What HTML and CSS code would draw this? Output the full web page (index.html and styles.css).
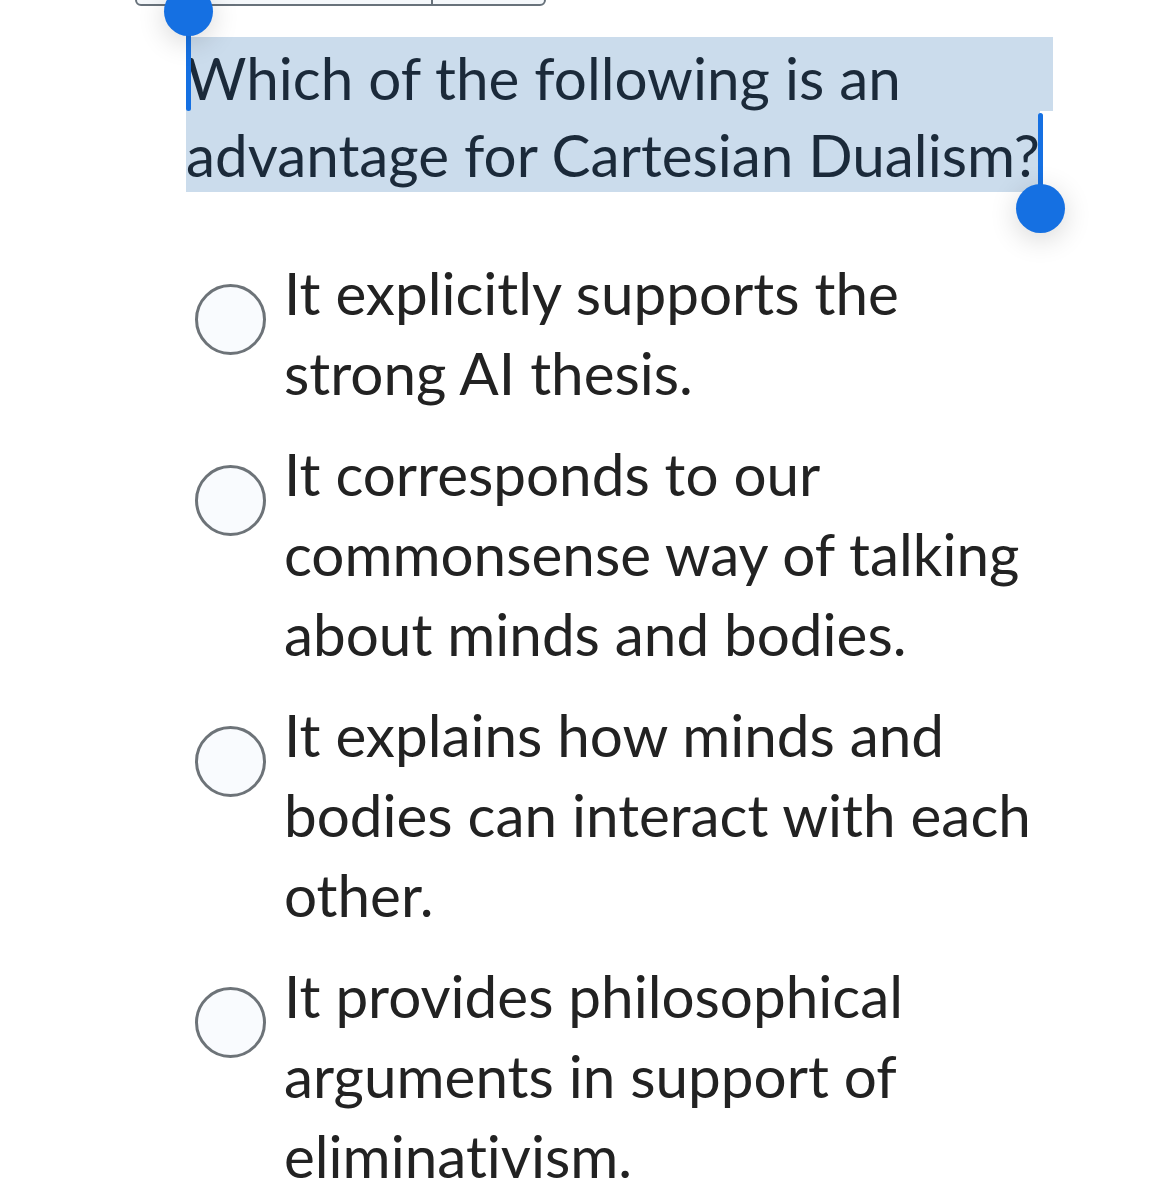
FILE: index.html
```html
<!DOCTYPE html>
<html lang="en">

<head>
    <meta charset="UTF-8" />
    <meta name="viewport" content="width=device-width, initial-scale=1.0" />
    <title>Quiz question</title>
    <link rel="stylesheet" href="styles.css">
</head>

<body>
    <!-- Toolbar cut off at the top of the screen -->
    <div class="toolbar">
        <div class="toolbar-cell wide"></div>
        <div class="toolbar-cell"></div>
    </div>

    <div class="quiz">
        <!-- Question text, currently selected -->
        <div class="question">
            <span class="sel-line first">Which of the following is an</span>
            <span class="sel-line">advantage for Cartesian Dualism?</span>

            <span class="handle start"></span>
            <span class="handle end"></span>
        </div>

        <!-- Answer choices -->
        <ul class="answers">
            <li class="answer">
                <span class="radio"></span>
                <span class="answer-text">It explicitly supports the strong AI thesis.</span>
            </li>
            <li class="answer">
                <span class="radio"></span>
                <span class="answer-text">It corresponds to our commonsense way of talking about minds and bodies.</span>
            </li>
            <li class="answer">
                <span class="radio"></span>
                <span class="answer-text">It explains how minds and bodies can interact with each other.</span>
            </li>
            <li class="answer">
                <span class="radio"></span>
                <span class="answer-text">It provides philosophical arguments in support of eliminativism.</span>
            </li>
        </ul>
    </div>
</body>
</html>
```

FILE: styles.css
```css
/* Page */
body {
    margin: 0;
    background: #ffffff;
    font-family: Lato, 'Open Sans', sans-serif;
    font-variant-ligatures: none;
    overflow: hidden;
}

/* Toolbar stub at the top */
.toolbar {
    display: flex;
    width: 411px;
    height: 8px;
    margin-left: 135px;
    margin-top: -2px;
    box-sizing: border-box;
    border: 2.5px solid #68727b;
    border-radius: 0 0 6px 6px;
    background: #f5f8fb;
}

.toolbar-cell {
    flex: 1;
}

.toolbar-cell.wide {
    flex: none;
    width: 294px;
    border-right: 2.5px solid #68727b;
}

/* Content column */
.quiz {
    width: 867px;
    margin-left: 186px;
}

/* Question with selection highlight */
.question {
    position: relative;
    margin-top: 31px;
    font-size: 58.4px;
    line-height: 80px;
    color: #1b2a3a;
}

.sel-line {
    background: #cbdcec;
}

.sel-line.first {
    display: block;
    height: 74px;
    line-height: 80px;
}

.sel-line:not(.first) {
    display: inline-block;
    height: 81px;
    line-height: 87px;
    vertical-align: top;
}

/* Selection handles */
.handle {
    position: absolute;
    width: 5px;
    background: #1570e2;
    border-radius: 3px;
}

.handle::before {
    content: "";
    position: absolute;
    left: 50%;
    width: 49px;
    height: 49px;
    margin-left: -24.5px;
    border-radius: 50%;
    background: #1570e2;
    box-shadow: 0 6px 28px rgba(0, 0, 0, 0.16);
}

.handle.start {
    left: 0;
    top: -29px;
    height: 103px;
}

.handle.start::before {
    top: -21px;
}

.handle.end {
    left: 852px;
    top: 76px;
    height: 100px;
}

.handle.end::before {
    bottom: -20px;
}

/* Answer list */
.answers {
    list-style: none;
    margin: 60px 0 0 9px;
    padding: 0;
    display: flex;
    flex-direction: column;
    gap: 21px;
}

.answer {
    display: flex;
    align-items: flex-start;
    gap: 18px;
}

.radio {
    flex: none;
    width: 71px;
    height: 71px;
    margin-top: 32px;
    box-sizing: border-box;
    border: 3px solid #6d7378;
    border-radius: 50%;
    background: #f9fbfe;
}

.answer-text {
    width: 775px;
    font-size: 58.4px;
    line-height: 80px;
    color: #222222;
}
```
